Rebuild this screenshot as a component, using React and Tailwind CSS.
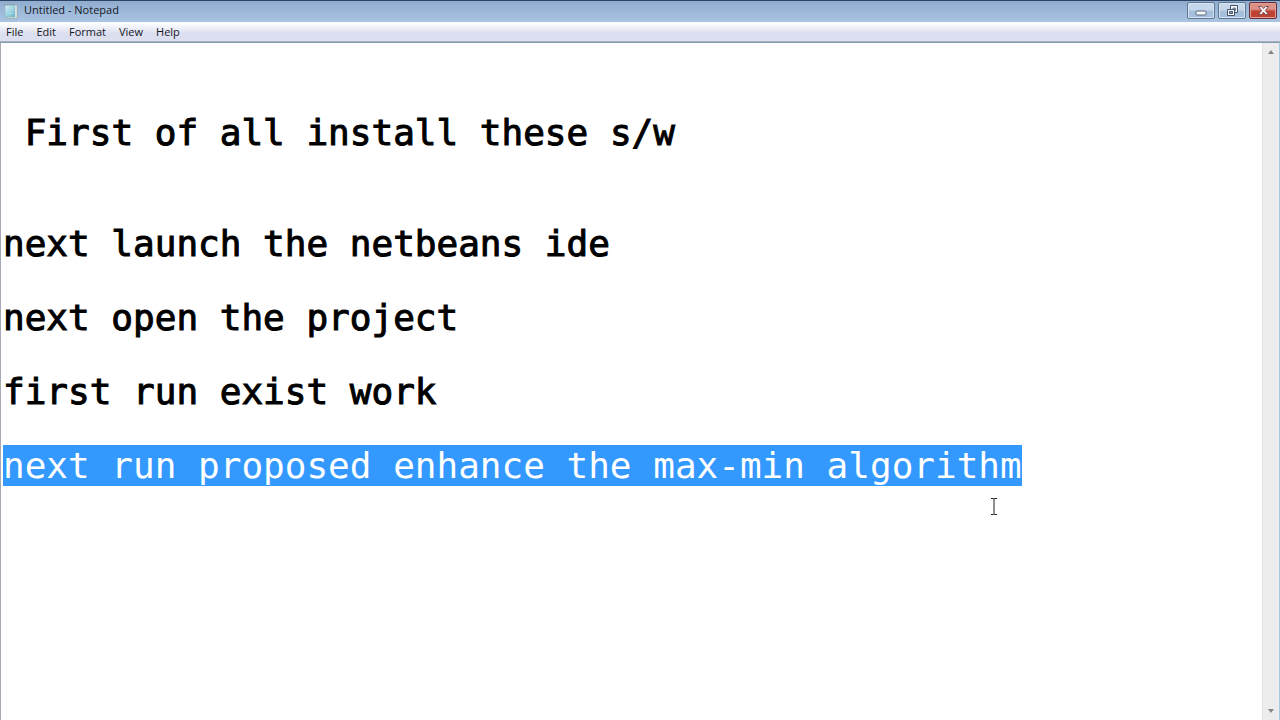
import { useEffect, useRef } from "react";

const NOTE = [
  "",
  "",
  " First of all install these s/w",
  "",
  "",
  "next launch the netbeans ide",
  "",
  "next open the project",
  "",
  "first run exist work",
  "",
  "next run proposed enhance the max-min algorithm",
].join("\n");

const MENUS = ["File", "Edit", "Format", "View", "Help"];

function NotepadIcon() {
  return (
    <svg width="14" height="16" viewBox="0 0 14 16" aria-hidden="true">
      <defs>
        <linearGradient id="page" x1="0" y1="0" x2="1" y2="1">
          <stop offset="0" stopColor="#d9f3f7" />
          <stop offset="1" stopColor="#63b6ca" />
        </linearGradient>
      </defs>
      <path d="M2 2h11v13H3z" fill="#f4f6ee" stroke="#8d9a90" strokeWidth="0.6" />
      <path d="M1 2h10v12H1z" fill="url(#page)" stroke="#8fb6c2" strokeWidth="0.6" />
      <path d="M1 2h10" stroke="#7d98a4" strokeWidth="1" strokeDasharray="1 1" />
      <path d="M2.5 5.5h7M2.5 8h7M2.5 10.5h7" stroke="#b4e0e9" strokeWidth="0.7" />
    </svg>
  );
}

function MinimizeIcon() {
  return (
    <svg width="12" height="6" viewBox="0 0 12 6" className="mt-1" aria-hidden="true">
      <rect x="1" y="1" width="10" height="4" rx="1" fill="#f5f8fb" stroke="#5c6b7d" />
    </svg>
  );
}

function RestoreIcon() {
  return (
    <svg width="13" height="12" viewBox="0 0 13 12" aria-hidden="true">
      <path d="M4.5.5h7v7h-7z" fill="#f5f8fb" stroke="#46556a" />
      <path d="M7 3h2.5v2.5H7z" fill="#8ea6c2" stroke="#46556a" strokeWidth="0.7" />
      <path d="M1.5 4.5h7v6h-7z" fill="#f5f8fb" stroke="#46556a" />
      <path d="M3.5 6.5h3v2h-3z" fill="#8ea6c2" stroke="#46556a" />
    </svg>
  );
}

function CloseIcon() {
  return (
    <svg width="13" height="11" viewBox="0 0 13 11" aria-hidden="true">
      <path
        d="M1.5 1.5h3l2 2.2 2-2.2h3L8.4 5.5l3.1 4h-3l-2-2.3-2 2.3h-3l3.1-4z"
        fill="#fbf7f6"
        stroke="#70454a"
        strokeWidth="0.9"
      />
    </svg>
  );
}

const BUTTON =
  "flex h-[17px] w-7 items-center justify-center rounded-xs border border-[#5f7791] bg-linear-to-b from-[#c6d7eb] from-45% to-[#a5bfdc] to-55% shadow-[inset_0_0_0_1px_#d5e3f2]";
const CLOSE =
  "flex h-[17px] w-7 items-center justify-center rounded-xs border border-[#6b2d35] bg-linear-to-b from-[#dc9188] from-40% to-[#bf4233] to-55% shadow-[inset_0_0_0_1px_#dfa097]";

export default function App() {
  const editor = useRef(null);

  useEffect(() => {
    editor.current.focus();
    editor.current.setSelectionRange(NOTE.lastIndexOf("\n") + 1, NOTE.length);
    editor.current.scrollTop = 0;
  }, []);

  return (
    <div className="relative flex h-screen flex-col overflow-hidden bg-white font-['Open_Sans','Noto_Sans',sans-serif] text-[11px] text-[#15181f]">
      <header className="flex h-[22px] shrink-0 items-center justify-between border-t border-[#2c4566] bg-linear-to-b from-[#8facce] via-[#9db9da] to-[#aac4e2] pr-[3px] pb-0.5 pl-1">
        <div className="flex items-center gap-1.5">
          <NotepadIcon />
          <h1>Untitled - Notepad</h1>
        </div>
        <div className="flex gap-[3px]">
          <button type="button" aria-label="Minimize" className={BUTTON}>
            <MinimizeIcon />
          </button>
          <button type="button" aria-label="Restore" className={BUTTON}>
            <RestoreIcon />
          </button>
          <button type="button" aria-label="Close" className={CLOSE}>
            <CloseIcon />
          </button>
        </div>
      </header>

      <nav className="flex h-5 shrink-0 items-center gap-[13px] border-b border-[#a9b0c0] bg-linear-to-b from-[#fbfcfe] from-10% to-[#dcdff0] to-60% pt-px pl-1.5">
        {MENUS.map((name) => (
          <button key={name} type="button">
            {name}
          </button>
        ))}
      </nav>

      <main className="flex min-h-0 grow overflow-hidden border-t border-r border-l border-t-[#7f9cb5] border-r-[#a5cce0] border-l-[#a5a9b3]">
        <textarea
          ref={editor}
          aria-label="Document text"
          spellCheck={false}
          defaultValue={NOTE}
          className="-mt-[3px] min-w-0 grow resize-none overflow-hidden bg-white pl-0.5 font-['DejaVu_Sans_Mono',monospace] text-[36px] leading-[37px] text-black caret-transparent outline-none [-webkit-text-stroke:1px_black] selection:bg-[#3399ff] selection:text-white selection:[-webkit-text-stroke:1px_white]"
        />
        <div className="flex w-[17px] shrink-0 flex-col items-center justify-between border-l border-[#e3e3e5] bg-[#ededee] py-1.5">
          <button type="button" aria-label="Scroll up">
            <svg width="8" height="6" viewBox="0 0 8 6" aria-hidden="true">
              <path d="M4 1l3 4H1z" fill="#85878c" />
            </svg>
          </button>
          <button type="button" aria-label="Scroll down">
            <svg width="8" height="6" viewBox="0 0 8 6" aria-hidden="true">
              <path d="M4 5l3-4H1z" fill="#85878c" />
            </svg>
          </button>
        </div>
      </main>

      <svg
        width="8"
        height="17"
        viewBox="0 0 8 17"
        className="pointer-events-none absolute top-[498px] left-[990px]"
        aria-hidden="true"
      >
        <path d="M1 .5h2.5l.5.5.5-.5H7M4 1v15M1 16.5h2.5L4 16l.5.5H7" fill="none" stroke="#1d1f24" />
      </svg>
    </div>
  );
}
